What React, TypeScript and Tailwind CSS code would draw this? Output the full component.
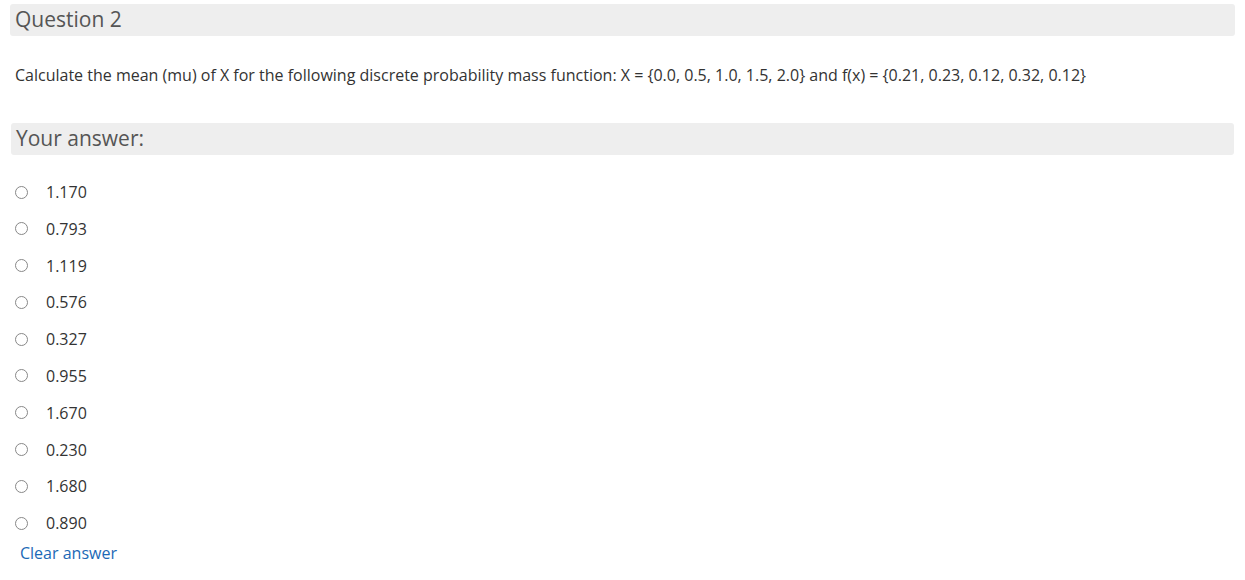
const OPTIONS = ["1.170", "0.793", "1.119", "0.576", "0.327", "0.955", "1.670", "0.230", "1.680", "0.890"];

export default function App() {
  return (
    <div className="min-h-[580px] bg-white font-['Open_Sans',sans-serif] text-[#333]">
      <div className="px-[10px] pt-[4px]">
        <div className="flex h-[32px] items-center rounded-[3px] bg-[#eeeeee] px-[5px] text-[21px] text-[#555]">
          Question 2
        </div>
      </div>

      <p className="mt-[29px] px-[15px] text-[16px] leading-[20px] text-[#333]">
        Calculate the mean (mu) of X for the following discrete probability mass function: X = {"{"}0.0, 0.5, 1.0, 1.5, 2.0{"}"} and f(x) = {"{"}0.21, 0.23, 0.12, 0.32, 0.12{"}"}
      </p>

      <div className="mt-[38px] px-[11px]">
        <div className="flex h-[32px] items-center rounded-[3px] bg-[#eeeeee] px-[5px] text-[21px] text-[#555]">
          Your answer:
        </div>
      </div>

      <div className="mt-[27px] flex flex-col gap-[16.8px] pl-[15px]">
        {OPTIONS.map((o) => (
          <label key={o} className="flex h-[20px] items-center text-[16px] text-[#333]">
            <span className="box-border h-[13px] w-[13px] rounded-full border border-[#888] bg-white" />
            <span className="ml-[18px]">{o}</span>
          </label>
        ))}
      </div>

      <div className="mt-[8px] pl-[20px] text-[16px] text-[#1b69b6]">Clear answer</div>
    </div>
  );
}
